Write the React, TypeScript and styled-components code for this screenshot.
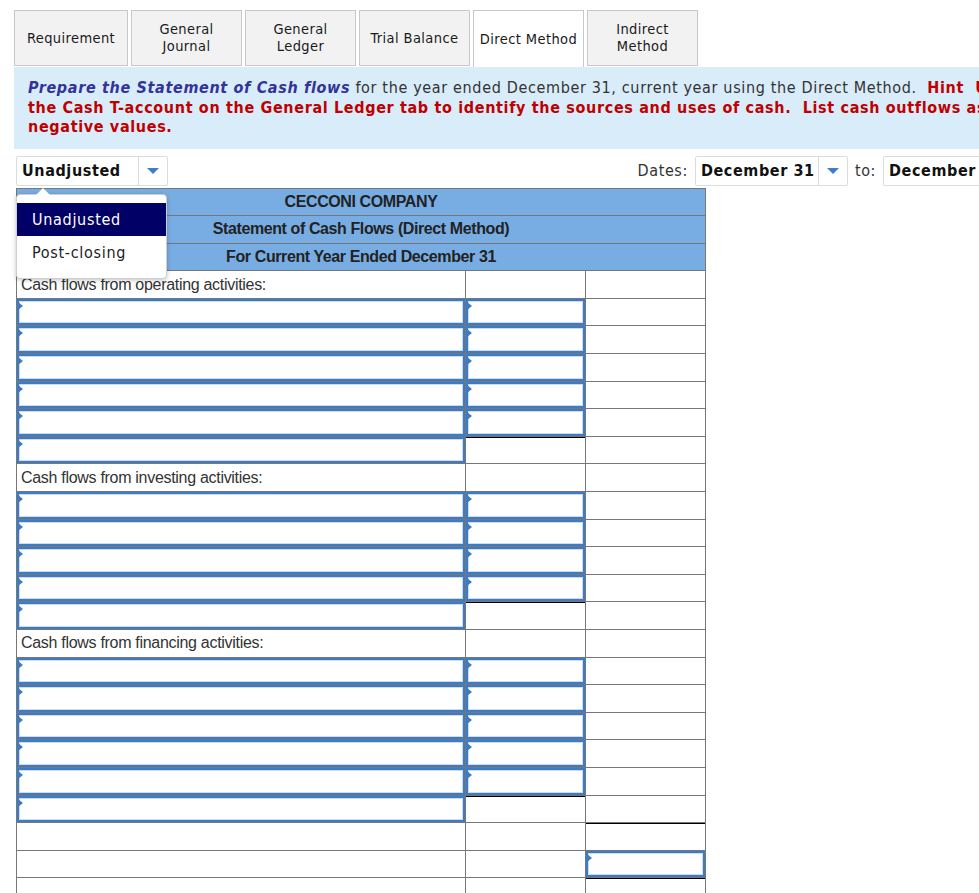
import React from 'react'
import styled, { createGlobalStyle } from 'styled-components'

const GlobalStyle = createGlobalStyle`
  html, body {
    margin: 0;
    padding: 0;
    background: #fff;
    overflow: hidden;
  }
`

type Kind = 'blank' | 'input' | 'ruled'
type Row = { label?: string; cells?: [Kind, Kind, Kind] }

const both: [Kind, Kind, Kind] = ['input', 'input', 'blank']
const lastLine: [Kind, Kind, Kind] = ['input', 'ruled', 'blank']

const rows: Row[] = [
  { label: 'Cash flows from operating activities:' },
  { cells: both }, { cells: both }, { cells: both }, { cells: both }, { cells: both },
  { cells: lastLine },
  { label: 'Cash flows from investing activities:' },
  { cells: both }, { cells: both }, { cells: both }, { cells: both },
  { cells: lastLine },
  { label: 'Cash flows from financing activities:' },
  { cells: both }, { cells: both }, { cells: both }, { cells: both }, { cells: both },
  { cells: lastLine },
  { cells: ['blank', 'blank', 'ruled'] },
  { cells: ['blank', 'blank', 'input'] },
  { cells: ['blank', 'blank', 'ruled'] },
]

const tabs = ['Requirement', 'General\nJournal', 'General\nLedger', 'Trial Balance', 'Direct Method', 'Indirect\nMethod']

const App = () => {
  return (
    <Page>
      <GlobalStyle />
      <Tabs>
        {tabs.map((t, i) => (
          <Tab key={t} first={i === 0} active={t === 'Direct Method'}>{t}</Tab>
        ))}
      </Tabs>
      <Info>
        <Strong>Prepare the Statement of Cash flows</Strong> for the year ended December 31, current year using the Direct Method.&nbsp; <Hint>Hint&nbsp; Use</Hint>
        <br />
        <Hint>the Cash T-account on the General Ledger tab to identify the sources and uses of cash.&nbsp; List cash outflows as</Hint>
        <br />
        <Hint>negative values.</Hint>
      </Info>
      <Controls>
        <Picker>
          <Select width={152}>
            <SelectText>Unadjusted</SelectText>
            <Arrow />
          </Select>
          <Menu>
            <MenuItem selected>Unadjusted</MenuItem>
            <MenuItem>Post-closing</MenuItem>
          </Menu>
        </Picker>
        <Dates>
          <Label>Dates:</Label>
          <Select width={153}>
            <SelectText>December 31</SelectText>
            <Arrow />
          </Select>
          <Label>to:</Label>
          <Select width={131}>
            <SelectText>December 31</SelectText>
          </Select>
        </Dates>
      </Controls>
      <Sheet>
        <Heading>CECCONI COMPANY</Heading>
        <Heading>Statement of Cash Flows (Direct Method)</Heading>
        <Heading>For Current Year Ended December 31</Heading>
        {rows.map((r, i) =>
          r.label ? (
            <React.Fragment key={i}>
              <Cell><RowLabel>{r.label}</RowLabel></Cell>
              <Cell />
              <Cell />
            </React.Fragment>
          ) : (
            <React.Fragment key={i}>
              {r.cells!.map((k, j) => (
                <Cell key={j} ruled={k === 'ruled'}>
                  {k === 'input' && <Entry />}
                </Cell>
              ))}
            </React.Fragment>
          )
        )}
      </Sheet>
    </Page>
  )
}

export default App

const Page = styled.div`
  width: 1000px;
  padding: 10px 0 0 14px;
  font-family: "DejaVu Sans Condensed", "DejaVu Sans", sans-serif;
  font-stretch: condensed;
  color: #222;
`

const Tabs = styled.div`
  display: flex;
  gap: 3px;
  height: 57px;
`

const Tab = styled.div<{ active?: boolean; first?: boolean }>`
  width: ${(p) => (p.first ? '114px' : '111px')};
  box-sizing: border-box;
  display: flex;
  align-items: center;
  justify-content: center;
  text-align: center;
  white-space: pre-line;
  font-size: 14.5px;
  letter-spacing: 0.4px;
  line-height: 17px;
  color: #1a1a1a;
  background: ${(p) => (p.active ? '#fff' : '#f2f2f2')};
  border: 1px solid #c8c8c8;
  border-bottom: ${(p) => (p.active ? 'none' : '1px solid #c8c8c8')};
  margin-bottom: ${(p) => (p.active ? '0' : '1px')};
`

const Info = styled.div`
  background: #d9ecf9;
  padding: 11px 0 12px 14px;
  font-size: 16px;
  letter-spacing: 0.65px;
  line-height: 19.5px;
  color: #333;
  white-space: nowrap;
`

const Strong = styled.span`
  color: #33339a;
  font-weight: bold;
  font-style: italic;
`

const Hint = styled.span`
  color: #c00000;
  font-weight: bold;
`

const Controls = styled.div`
  display: flex;
  align-items: center;
  margin: 7px 0 0 2px;
  height: 30px;
`

const Picker = styled.div`
  position: relative;
`

const Select = styled.div<{ width: number }>`
  width: ${(p) => p.width}px;
  height: 30px;
  box-sizing: border-box;
  border: 1px solid #dcdcdc;
  border-radius: 2px;
  display: flex;
  align-items: center;
  justify-content: space-between;
  background: #fff;
  overflow: hidden;
`

const SelectText = styled.span`
  padding-left: 5px;
  font-size: 16px;
  letter-spacing: 0.6px;
  font-weight: bold;
  color: #111;
  white-space: nowrap;
`

const Arrow = styled.span`
  width: 28px;
  height: 100%;
  flex: none;
  border-left: 1px solid #dcdcdc;
  display: flex;
  align-items: center;
  justify-content: center;
  &::after {
    content: '';
    border-left: 6px solid transparent;
    border-right: 6px solid transparent;
    border-top: 6px solid #3d7cc9;
  }
`

const Menu = styled.div`
  position: absolute;
  top: 38px;
  left: 0;
  width: 151px;
  padding: 8px 0 9px;
  box-sizing: border-box;
  background: #fff;
  border: 1px solid #cfcfcf;
  border-radius: 4px;
  box-shadow: 0 1px 4px rgba(0, 0, 0, 0.25);
  z-index: 2;
  &::before {
    content: '';
    position: absolute;
    top: -7px;
    left: 19px;
    border-left: 7px solid transparent;
    border-right: 7px solid transparent;
    border-bottom: 7px solid #fff;
  }
`

const MenuItem = styled.div<{ selected?: boolean }>`
  height: 33px;
  display: flex;
  align-items: center;
  padding-left: 15px;
  font-size: 16px;
  letter-spacing: 0.7px;
  color: ${(p) => (p.selected ? '#fff' : '#222')};
  background: ${(p) => (p.selected ? '#000066' : 'transparent')};
`

const Dates = styled.div`
  margin-left: auto;
  display: flex;
  align-items: center;
  gap: 7px;
`

const Label = styled.span`
  font-size: 16px;
  letter-spacing: 0.6px;
  color: #333;
`

const Sheet = styled.div`
  margin: 2px 0 0 2px;
  width: 689px;
  display: grid;
  grid-template-columns: 449px 120px 120px;
  grid-auto-rows: 27.6px;
  border-left: 1px solid #777;
  border-top: 1px solid #777;
  font-family: "Liberation Sans", Arial, sans-serif;
  font-stretch: normal;
`

const Heading = styled.div`
  grid-column: 1 / -1;
  background: #78ade4;
  border-right: 1px solid #777;
  border-bottom: 1px solid #777;
  display: flex;
  align-items: center;
  justify-content: center;
  font-size: 16px;
  letter-spacing: -0.4px;
  font-weight: bold;
  color: #222;
`

const Cell = styled.div<{ ruled?: boolean }>`
  position: relative;
  border-right: 1px solid #777;
  border-bottom: 1px solid #777;
  box-shadow: ${(p) => (p.ruled ? 'inset 0 1px 0 #000' : 'none')};
  display: flex;
  align-items: center;
`

const RowLabel = styled.span`
  padding-left: 4px;
  font-size: 16px;
  letter-spacing: -0.3px;
  color: #333;
`

const Entry = styled.div`
  position: relative;
  width: 100%;
  height: 100%;
  box-sizing: border-box;
  border: 2px solid #3e7bc5;
  box-shadow: inset 0 0 0 1px #c9dcf1;
  &::before {
    content: '';
    position: absolute;
    top: 1px;
    left: -1px;
    border-top: 4px solid transparent;
    border-bottom: 4px solid transparent;
    border-left: 5px solid #3e7bc5;
  }
`
